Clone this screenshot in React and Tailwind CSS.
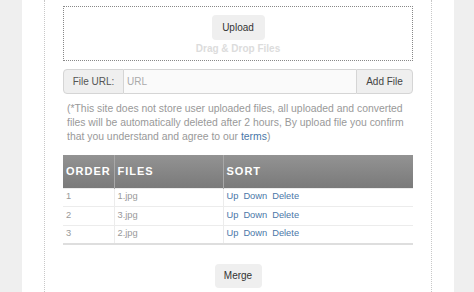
export default function App() {
  const rows = [
    { order: 1, file: "1.jpg" },
    { order: 2, file: "3.jpg" },
    { order: 3, file: "2.jpg" },
  ];

  return (
    <div
      className="flex h-[292px] w-[474px] overflow-hidden bg-[#efefef]"
      style={{ fontFamily: '"Liberation Sans", Arial, sans-serif' }}
    >
      <div className="w-[22px] shrink-0" />
      {/* white page */}
      <div className="w-[432px] shrink-0 bg-white px-[22px]">
        <div className="h-full border-x border-dotted border-[#c8c8c8] pl-[18px] pr-[18px] pt-[6px]">
          {/* upload box */}
          <div className="flex h-[55px] flex-col items-center border border-dotted border-[#888] pt-[8px]">
            <button className="h-[25px] w-[53px] rounded-sm bg-[#efefef] text-[10px] text-[#333]">
              Upload
            </button>
            <div className="mt-[1px] text-[10px] font-bold text-[#dcdcdc]">Drag &amp; Drop Files</div>
          </div>

          {/* url input */}
          <div className="mt-[8px] flex h-[25px] text-[10px]">
            <div className="flex w-[61px] items-center justify-center rounded-l-sm border border-[#d5d5d5] bg-[#efefef] text-[#555]">
              File URL:
            </div>
            <input
              placeholder="URL"
              className="min-w-0 flex-1 border-y border-[#d5d5d5] bg-[#fafafa] px-[3px] text-[10px] outline-none placeholder:text-[#aaa]"
            />
            <button className="w-[57px] rounded-r-sm border border-[#d5d5d5] bg-[#efefef] text-[#444]">
              Add File
            </button>
          </div>

          {/* note */}
          <p className="mt-[8px] pl-[4px] text-[10.4px] leading-[14px] text-[#999]">
            (*This site does not store user uploaded files, all uploaded and converted files will be
            automatically deleted after 2 hours, By upload file you confirm that you understand and
            agree to our <a className="text-[#4a77a8]">terms</a>)
          </p>

          {/* file table */}
          <table className="mt-[11px] w-full table-fixed border-collapse border-b-2 border-[#dedede] text-[9.3px]">
            <thead>
              <tr className="h-[33px] bg-gradient-to-b from-[#939393] to-[#7a7a7a] text-left text-[11px] font-bold tracking-[1px] text-white">
                <th className="w-[51px] pl-[3px]">ORDER</th>
                <th className="w-[109px] border-l border-[#a8a8a8] pl-[3px]">FILES</th>
                <th className="border-l border-[#a8a8a8] pl-[3px]">SORT</th>
              </tr>
            </thead>
            <tbody>
              {rows.map((r) => (
                <tr key={r.order} className="h-[18.5px] border-t border-[#ececec] text-[#999]">
                  <td className="pl-[3px]">{r.order}</td>
                  <td className="border-l border-[#ececec] pl-[3px]">{r.file}</td>
                  <td className="border-l border-[#ececec] pl-[3px] text-[#4a77a8]">
                    <span className="mr-[5px]">Up</span>
                    <span className="mr-[5px]">Down</span>
                    <span>Delete</span>
                  </td>
                </tr>
              ))}
            </tbody>
          </table>

          <div className="mt-[19px] flex justify-center">
            <button className="h-[24px] w-[47px] rounded-sm bg-[#efefef] text-[10px] text-[#333]">
              Merge
            </button>
          </div>
        </div>
      </div>
    </div>
  );
}
